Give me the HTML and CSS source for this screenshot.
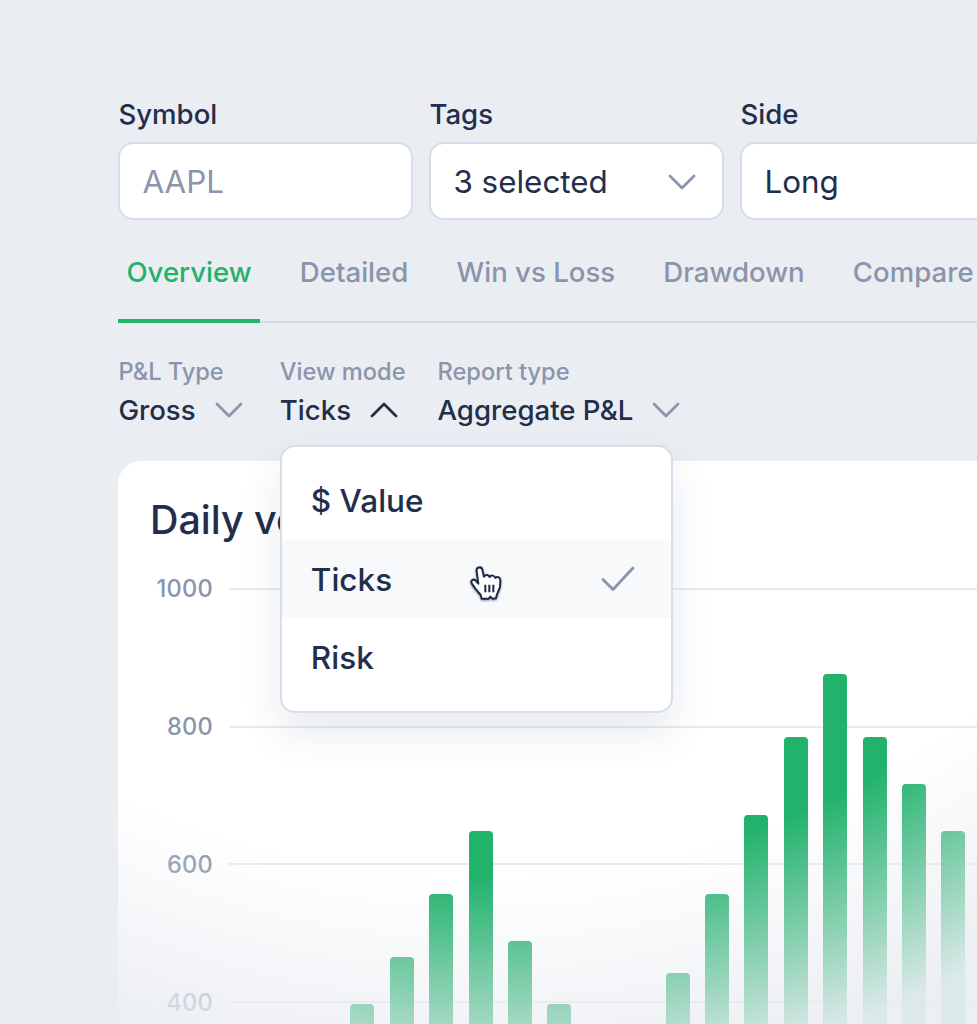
FILE: index.html
```html
<!DOCTYPE html>
<html lang="en">
<head>
    <meta charset="UTF-8">
    <meta name="viewport" content="width=device-width, initial-scale=1.0">
    <title>Reports</title>
    <link rel="stylesheet" href="styles.css">
</head>
<body>
    <main class="page">
        <div class="filters">
            <div class="field">
                <span class="label">Symbol</span>
                <div class="input placeholder">AAPL</div>
            </div>
            <div class="field">
                <span class="label">Tags</span>
                <div class="input">
                    <span>3 selected</span>
                    <svg class="chevron" viewBox="0 0 28 16"><path d="M2 2l12 12L26 2"/></svg>
                </div>
            </div>
            <div class="field">
                <span class="label">Side</span>
                <div class="input">Long</div>
            </div>
        </div>

        <nav class="tabs">
            <a class="tab active">Overview</a>
            <a class="tab">Detailed</a>
            <a class="tab">Win vs Loss</a>
            <a class="tab">Drawdown</a>
            <a class="tab">Compare</a>
        </nav>

        <div class="selectors">
            <div class="selector">
                <span class="selector-label">P&amp;L Type</span>
                <div class="selector-value">
                    <span>Gross</span>
                    <svg class="chevron" viewBox="0 0 28 16"><path d="M2 2l12 12L26 2"/></svg>
                </div>
            </div>
            <div class="selector">
                <span class="selector-label">View mode</span>
                <div class="selector-value open">
                    <span>Ticks</span>
                    <svg class="chevron" viewBox="0 0 28 16"><path d="M2 14L14 2l12 12"/></svg>
                </div>
                <div class="menu">
                    <div class="menu-item">$ Value</div>
                    <div class="menu-item selected">
                        <span>Ticks</span>
                        <svg class="check" viewBox="0 0 34 26"><path d="M2 13.5L12 23.5 32 2"/></svg>
                        <svg class="cursor" viewBox="90 79 96 108">
                            <path d="M110 95C108 82 124 79 127 90L132 111C137 104 146 105 149 112C154 105 163 107 166 115C173 109 181 114 181 122L180 141C178 152 170 160 168 176L157 177L151 171L146 177H125L122 166L106 147L95 131C91 122 100 117 106 122L115 132Z"/>
                            <path d="M136 135v23M148 135v23M160 135v23"/>
                        </svg>
                    </div>
                    <div class="menu-item">Risk</div>
                </div>
            </div>
            <div class="selector">
                <span class="selector-label">Report type</span>
                <div class="selector-value">
                    <span>Aggregate P&amp;L</span>
                    <svg class="chevron" viewBox="0 0 28 16"><path d="M2 2l12 12L26 2"/></svg>
                </div>
            </div>
        </div>

        <section class="card">
            <h2>Daily volume</h2>
            <div class="chart">
                <div class="grid-row"><span>1000</span></div>
                <div class="grid-row"><span>800</span></div>
                <div class="grid-row"><span>600</span></div>
                <div class="grid-row"><span>400</span></div>
                <div class="bars">
                    <i style="height: 274px"></i>
                    <i style="height: 321px"></i>
                    <i style="height: 384px"></i>
                    <i style="height: 447px"></i>
                    <i style="height: 337px"></i>
                    <i style="height: 274px"></i>
                    <i style="height: 0"></i>
                    <i style="height: 0"></i>
                    <i style="height: 305px"></i>
                    <i style="height: 384px"></i>
                    <i style="height: 463px"></i>
                    <i style="height: 541.5px"></i>
                    <i style="height: 604.5px"></i>
                    <i style="height: 541.5px"></i>
                    <i style="height: 494.5px"></i>
                    <i style="height: 447px"></i>
                </div>
            </div>
        </section>
    </main>
</body>
</html>
```
FILE: styles.css
```css
* {
    box-sizing: border-box;
}
body {
    margin: 0;
    height: 100vh;
    overflow: hidden;
    background: #eaedf2;
    color: #222e4b;
    font-family: Inter, "Liberation Sans", sans-serif;
    font-weight: 500;
}
.page {
    width: 1200px;
    padding: 97px 0 0 118.4px;
}
.filters {
    display: flex;
    gap: 16px;
}
.field {
    width: 295px;
}
.field:last-child {
    flex: 1;
}
.label {
    display: block;
    margin-bottom: 11px;
    font-size: 27.6px;
    line-height: 34px;
}
.input {
    display: flex;
    align-items: center;
    justify-content: space-between;
    height: 78px;
    padding: 1px 26px 0 22px;
    border: 2px solid #d5dee9;
    border-radius: 15px;
    background: #fff;
    font-size: 31.4px;
    font-weight: 400;
}
.placeholder {
    color: #8a94ab;
}
.chevron {
    width: 28px;
    height: 16px;
    fill: none;
    stroke: #8a94ab;
    stroke-width: 2.8;
    stroke-linecap: round;
    stroke-linejoin: round;
}
.tabs {
    display: flex;
    gap: 32.2px;
    margin-top: 35px;
    box-shadow: inset 0 -2px #d3dde8;
}
.tab {
    height: 68px;
    padding: 0 8px;
    border-bottom: 4px solid transparent;
    color: #8a94ab;
    font-size: 27.6px;
    line-height: 34px;
}
.tab.active {
    color: #21b26c;
    border-color: #21b26c;
}
.selectors {
    display: flex;
    gap: 32px;
    margin-top: 34px;
}
.selector {
    position: relative;
}
.selector-label {
    display: block;
    margin-bottom: 6px;
    color: #8a94ab;
    font-size: 23.6px;
    line-height: 30px;
}
.selector-value {
    display: flex;
    align-items: center;
    gap: 19px;
    padding-right: 5.3px;
    font-size: 27.6px;
    line-height: 34px;
}
.open .chevron {
    stroke: #222e4b;
}
.menu {
    position: absolute;
    top: 88px;
    left: 0;
    z-index: 2;
    width: 393px;
    padding: 14px 0;
    border: 2px solid #d5dee9;
    border-radius: 15px;
    background: #fff;
    box-shadow: 0 20px 40px rgba(34, 46, 75, 0.1);
    font-size: 31.5px;
}
.menu-item {
    position: relative;
    display: flex;
    align-items: center;
    justify-content: space-between;
    height: 78.7px;
    padding: 0 36px 0 29px;
}
.menu-item.selected {
    background: #f7f9fb;
}
.check {
    width: 34px;
    height: 26px;
    fill: none;
    stroke: #8a94ab;
    stroke-width: 2.8;
    stroke-linecap: round;
    stroke-linejoin: round;
}
.cursor {
    position: absolute;
    top: 26px;
    left: 188px;
    width: 32px;
    height: 36px;
    fill: #fff;
    stroke: #1c2947;
    stroke-width: 6;
    stroke-linejoin: round;
    filter: drop-shadow(0 1px 1px rgba(28, 41, 71, 0.5));
}
.card {
    position: relative;
    height: 860px;
    margin-top: 34px;
    padding: 35px 0 0 31.6px;
    border-radius: 23px;
    background: #fff;
}
/* fades the lower part of the card into the page */
.card::after {
    content: "";
    position: absolute;
    inset: 0;
    background: radial-gradient(circle at 362px -411px, rgba(234, 237, 242, 0) 825px, rgba(234, 237, 242, 0.93) 1040px);
}
h2 {
    margin: 0;
    font-size: 39.4px;
    font-weight: 500;
    line-height: 48px;
}
.chart {
    position: relative;
    height: 734px;
    margin-top: -24px;
}
.grid-row {
    display: flex;
    align-items: center;
    gap: 16px;
    height: 137.8px;
    color: #8a94ab;
    font-size: 23.6px;
    letter-spacing: 0.25px;
}
.grid-row span {
    width: 63px;
    text-align: right;
}
.grid-row::after {
    content: "";
    flex: 1;
    height: 2px;
    background: #e5ebf0;
}
.bars {
    position: absolute;
    left: 200.5px;
    bottom: -24px;
    display: flex;
    align-items: flex-end;
    gap: 15.4px;
}
.bars i {
    width: 24px;
    border-radius: 4px 4px 0 0;
    background: #21b26c;
}
```
